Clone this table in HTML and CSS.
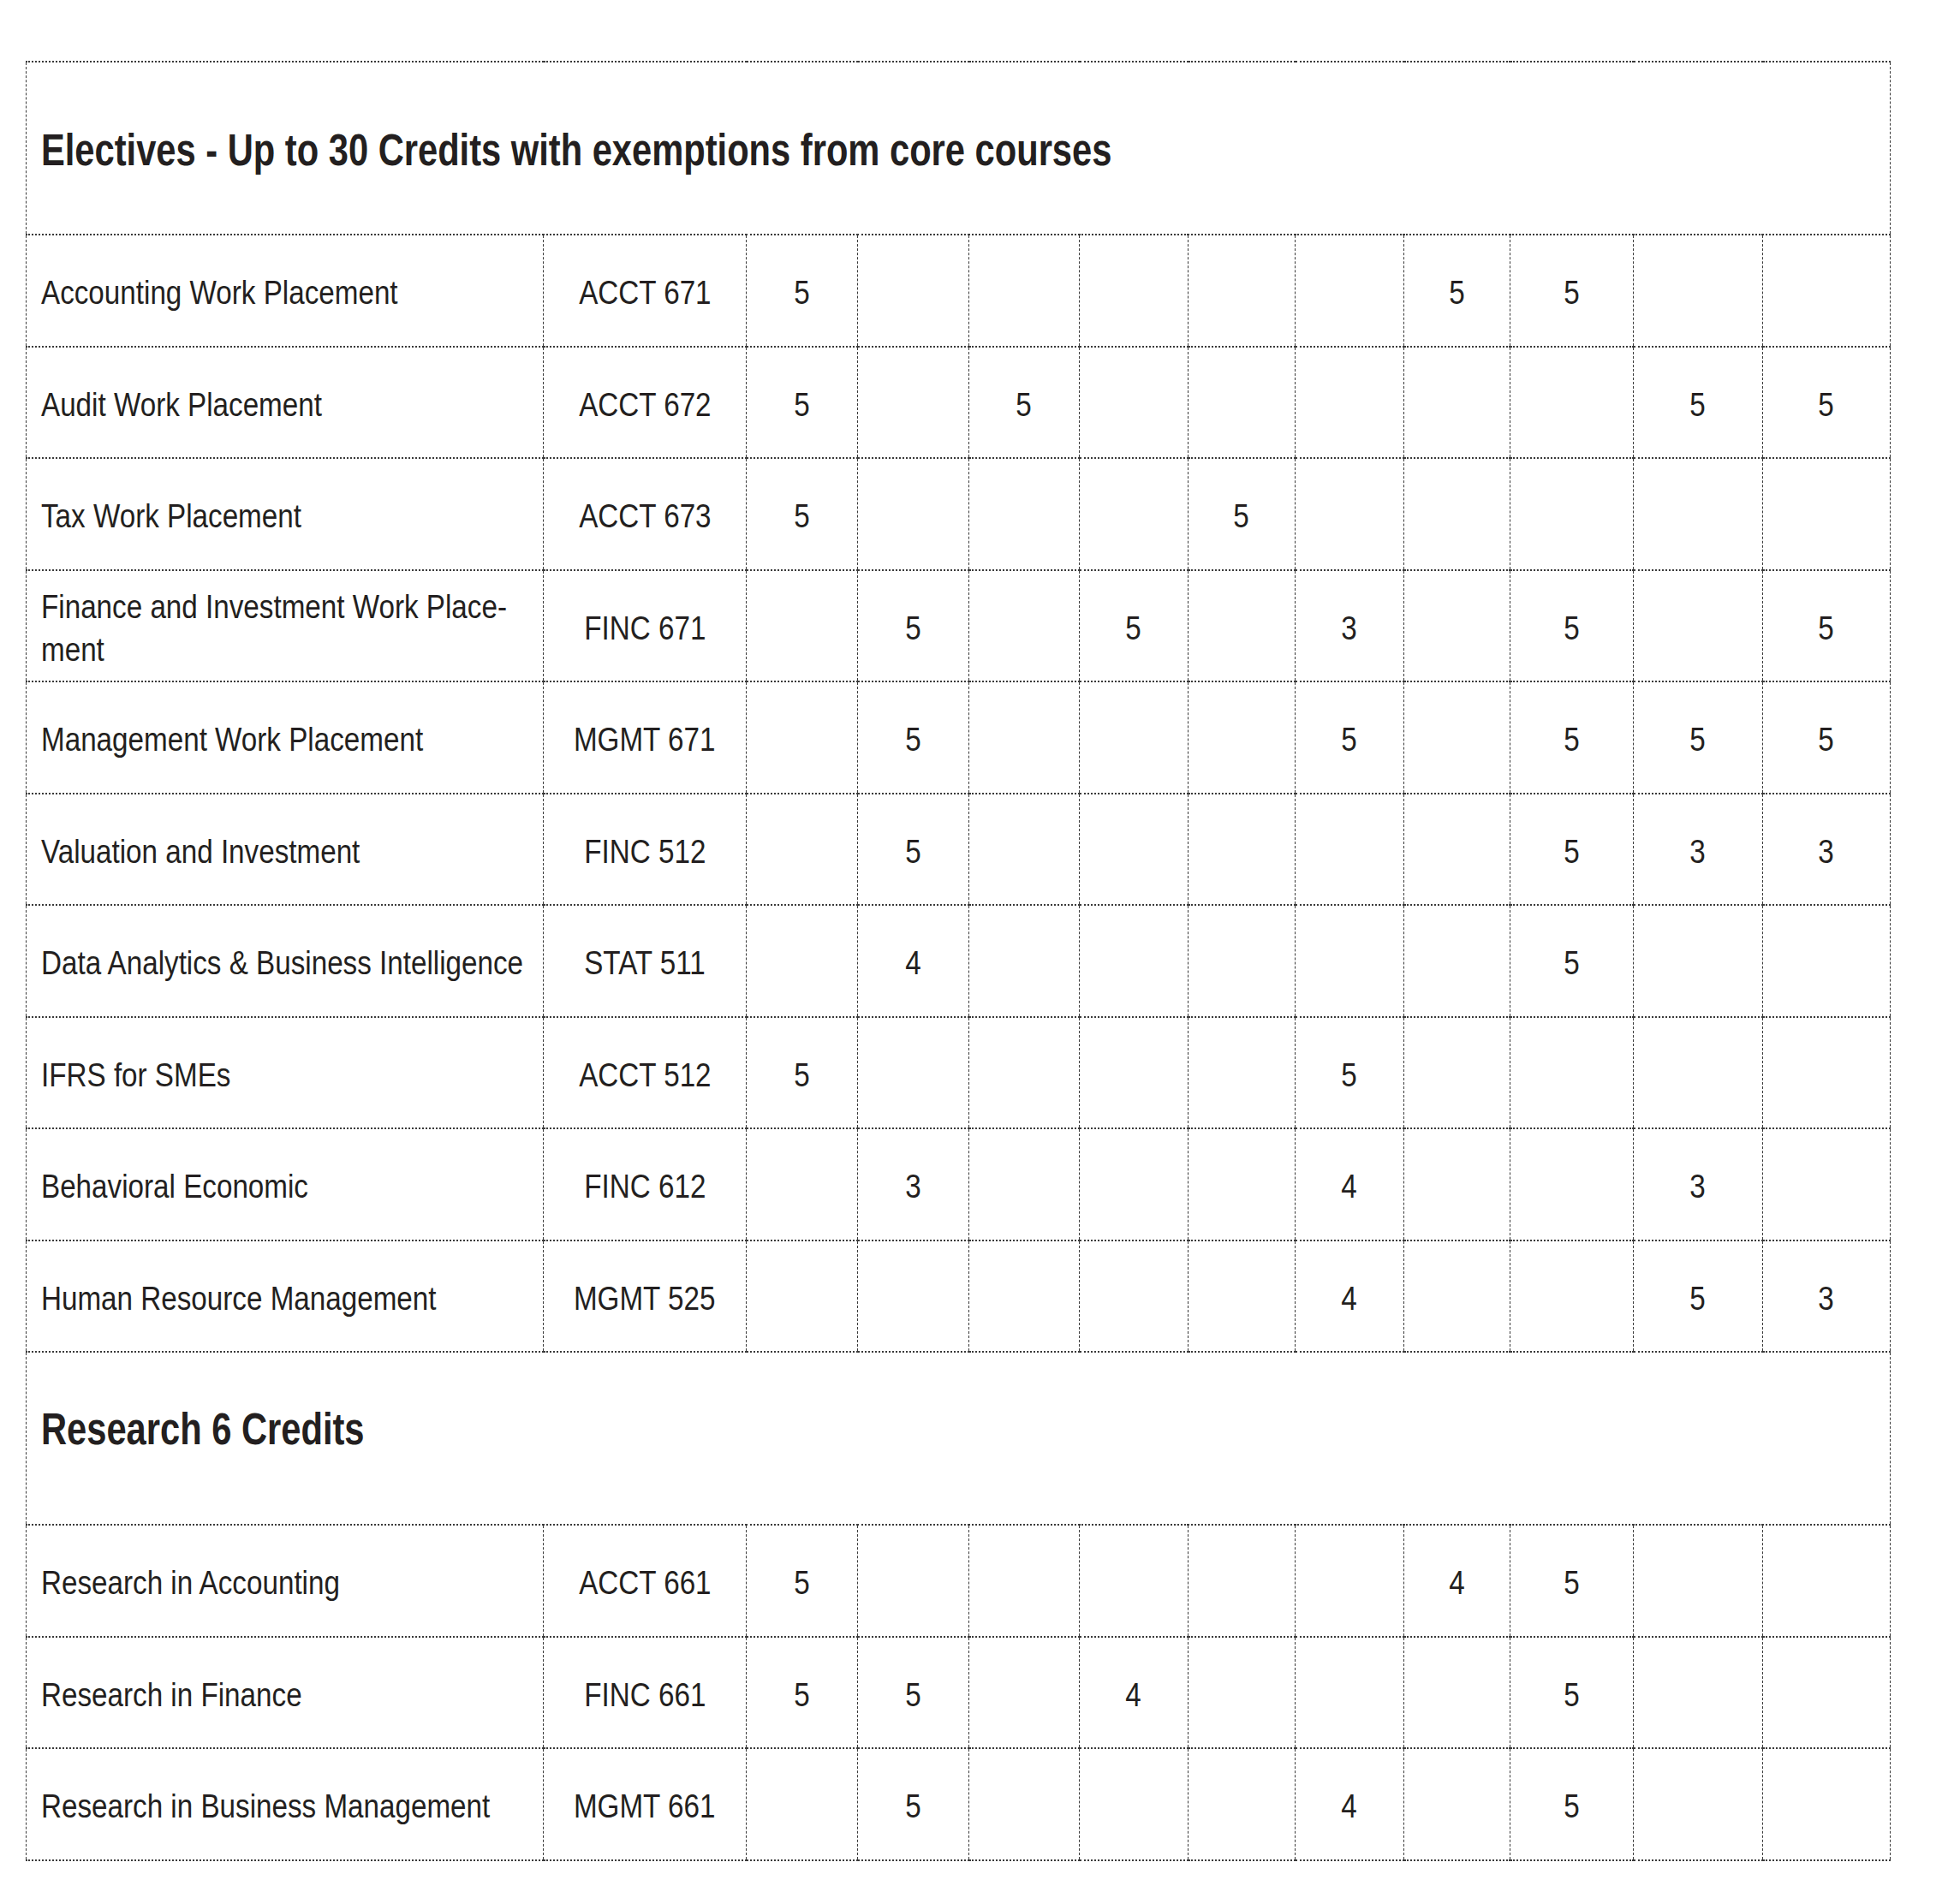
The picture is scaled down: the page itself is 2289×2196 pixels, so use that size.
FILE: index.html
```html
<!DOCTYPE html>
<html lang="en">
<head>
<meta charset="utf-8">
<title>Electives and Research Credits</title>
<link rel="stylesheet" href="styles.css">
</head>
<body>
<div class="page">
<table class="grid">
<colgroup>
<col class="c-name"><col class="c-code">
<col class="w130"><col class="w130"><col class="w129"><col class="w127"><col class="w125">
<col class="w127"><col class="w124"><col class="w144"><col class="w151"><col class="w149">
</colgroup>
<tbody>
<tr class="sec"><td colspan="12" class="sec-title"><span class="t">Electives - Up to 30 Credits with exemptions from core courses</span></td></tr>
<tr><td class="name"><span class="t">Accounting Work Placement</span></td><td><span class="t">ACCT 671</span></td><td><span class="t">5</span></td><td></td><td></td><td></td><td></td><td></td><td><span class="t">5</span></td><td><span class="t">5</span></td><td></td><td></td></tr>
<tr><td class="name"><span class="t">Audit Work Placement</span></td><td><span class="t">ACCT 672</span></td><td><span class="t">5</span></td><td></td><td><span class="t">5</span></td><td></td><td></td><td></td><td></td><td></td><td><span class="t">5</span></td><td><span class="t">5</span></td></tr>
<tr><td class="name"><span class="t">Tax Work Placement</span></td><td><span class="t">ACCT 673</span></td><td><span class="t">5</span></td><td></td><td></td><td></td><td><span class="t">5</span></td><td></td><td></td><td></td><td></td><td></td></tr>
<tr><td class="name"><span class="t">Finance and Investment Work Place-<br>ment</span></td><td><span class="t">FINC 671</span></td><td></td><td><span class="t">5</span></td><td></td><td><span class="t">5</span></td><td></td><td><span class="t">3</span></td><td></td><td><span class="t">5</span></td><td></td><td><span class="t">5</span></td></tr>
<tr><td class="name"><span class="t">Management Work Placement</span></td><td><span class="t">MGMT 671</span></td><td></td><td><span class="t">5</span></td><td></td><td></td><td></td><td><span class="t">5</span></td><td></td><td><span class="t">5</span></td><td><span class="t">5</span></td><td><span class="t">5</span></td></tr>
<tr><td class="name"><span class="t">Valuation and Investment</span></td><td><span class="t">FINC 512</span></td><td></td><td><span class="t">5</span></td><td></td><td></td><td></td><td></td><td></td><td><span class="t">5</span></td><td><span class="t">3</span></td><td><span class="t">3</span></td></tr>
<tr><td class="name"><span class="t">Data Analytics &amp; Business Intelligence</span></td><td><span class="t">STAT 511</span></td><td></td><td><span class="t">4</span></td><td></td><td></td><td></td><td></td><td></td><td><span class="t">5</span></td><td></td><td></td></tr>
<tr><td class="name"><span class="t">IFRS for SMEs</span></td><td><span class="t">ACCT 512</span></td><td><span class="t">5</span></td><td></td><td></td><td></td><td></td><td><span class="t">5</span></td><td></td><td></td><td></td><td></td></tr>
<tr><td class="name"><span class="t">Behavioral Economic</span></td><td><span class="t">FINC 612</span></td><td></td><td><span class="t">3</span></td><td></td><td></td><td></td><td><span class="t">4</span></td><td></td><td></td><td><span class="t">3</span></td><td></td></tr>
<tr><td class="name"><span class="t">Human Resource Management</span></td><td><span class="t">MGMT 525</span></td><td></td><td></td><td></td><td></td><td></td><td><span class="t">4</span></td><td></td><td></td><td><span class="t">5</span></td><td><span class="t">3</span></td></tr>
<tr class="sec sec2"><td colspan="12" class="sec-title"><span class="t">Research 6 Credits</span></td></tr>
<tr><td class="name"><span class="t">Research in Accounting</span></td><td><span class="t">ACCT 661</span></td><td><span class="t">5</span></td><td></td><td></td><td></td><td></td><td></td><td><span class="t">4</span></td><td><span class="t">5</span></td><td></td><td></td></tr>
<tr><td class="name"><span class="t">Research in Finance</span></td><td><span class="t">FINC 661</span></td><td><span class="t">5</span></td><td><span class="t">5</span></td><td></td><td><span class="t">4</span></td><td></td><td></td><td></td><td><span class="t">5</span></td><td></td><td></td></tr>
<tr><td class="name"><span class="t">Research in Business Management</span></td><td><span class="t">MGMT 661</span></td><td></td><td><span class="t">5</span></td><td></td><td></td><td></td><td><span class="t">4</span></td><td></td><td><span class="t">5</span></td><td></td><td></td></tr>
</tbody>
</table>
</div>
</body>
</html>
```
FILE: styles.css
```css
html, body {
  margin: 0;
  padding: 0;
  background: #ffffff;
}

.page {
  padding: 71px 0 0 30px;
}

.grid {
  border-collapse: collapse;
  table-layout: fixed;
  width: 2178px;
  font-family: "Liberation Sans", Arial, sans-serif;
  color: #231f20;
  font-size: 38px;
  line-height: 50px;
}

.c-name { width: 604px; }
.c-code { width: 237px; }
.w130 { width: 130px; }
.w129 { width: 129px; }
.w127 { width: 127px; }
.w125 { width: 125px; }
.w124 { width: 124px; }
.w144 { width: 144px; }
.w151 { width: 151px; }
.w149 { width: 149px; }

.grid td {
  border-top: 2px dotted #3a3a3a;
  border-bottom: 2px dotted #3a3a3a;
  border-left: 1.5px dashed #3a3a3a;
  border-right: 1.5px dashed #3a3a3a;
  text-align: center;
  vertical-align: middle;
  padding: 6px 0 0 0;
  height: 130.5px;
  box-sizing: border-box;
  white-space: nowrap;
  overflow: visible;
}

.t {
  display: inline-block;
  white-space: nowrap;
  transform: scaleX(0.874);
  transform-origin: center center;
}

.grid td.name {
  text-align: left;
  padding: 6px 0 0 17px;
}

.grid td.name .t,
.sec-title .t {
  transform-origin: left center;
}

.sec td.sec-title {
  height: 202px;
  text-align: left;
  padding: 6px 0 0 17px;
  font-weight: bold;
  font-size: 51px;
}

.sec-title .t {
  transform: scaleX(0.817);
}

.sec2 td.sec-title {
  height: 202px;
  padding-bottom: 26px;
}
```
